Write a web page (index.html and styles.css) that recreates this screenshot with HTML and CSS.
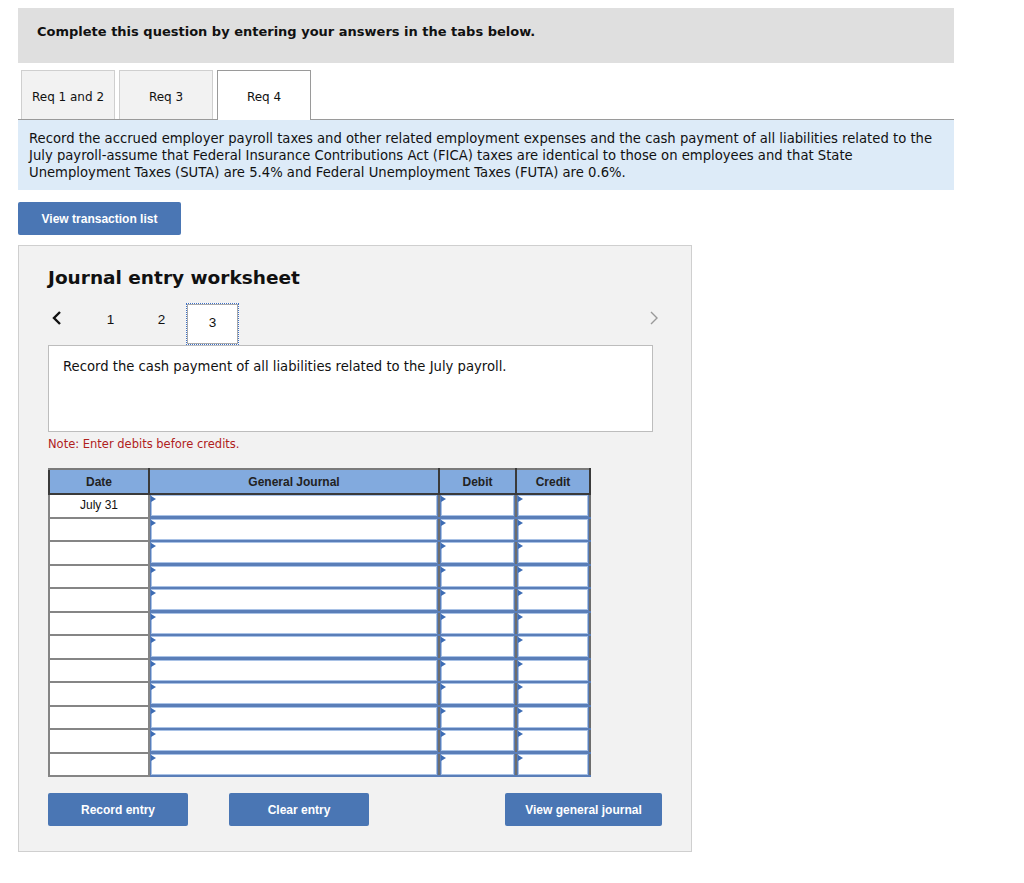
FILE: index.html
```html
<!DOCTYPE html>
<html lang="en">
<head>
    <meta charset="UTF-8">
    <meta name="viewport" content="width=device-width, initial-scale=1.0">
    <title>Journal entry worksheet</title>
    <link rel="stylesheet" href="styles.css">
</head>
<body>
    <div class="page">
        <div class="prompt">Complete this question by entering your answers in the tabs below.</div>

        <div class="tabs">
            <div class="tab">Req 1 and 2</div>
            <div class="tab">Req 3</div>
            <div class="tab active">Req 4</div>
        </div>

        <div class="info">
            Record the accrued employer payroll taxes and other related employment expenses and the cash payment of all liabilities related to the July payroll-assume that Federal Insurance Contributions Act (FICA) taxes are identical to those on employees and that State Unemployment Taxes (SUTA) are 5.4% and Federal Unemployment Taxes (FUTA) are 0.6%.
        </div>

        <button class="btn btn-list">View transaction list</button>

        <div class="worksheet">
            <h2>Journal entry worksheet</h2>

            <div class="steps">
                <span class="arrow prev">
                    <svg width="12" height="16" viewBox="0 0 12 16"><path d="M9 2 L3 8 L9 14" fill="none" stroke="#111" stroke-width="2.4"/></svg>
                </span>
                <span class="step">1</span>
                <span class="step">2</span>
                <span class="step current">3</span>
                <span class="arrow next">
                    <svg width="12" height="16" viewBox="0 0 12 16"><path d="M3 2 L9 8 L3 14" fill="none" stroke="#999" stroke-width="1.4"/></svg>
                </span>
            </div>

            <div class="desc">Record the cash payment of all liabilities related to the July payroll.</div>

            <p class="note">Note: Enter debits before credits.</p>

            <table class="journal">
                <thead>
                    <tr>
                        <th class="c-date">Date</th>
                        <th class="c-acct">General Journal</th>
                        <th class="c-num">Debit</th>
                        <th class="c-num2">Credit</th>
                    </tr>
                </thead>
                <tbody id="rows"></tbody>
            </table>

            <div class="actions">
                <button class="btn">Record entry</button>
                <button class="btn">Clear entry</button>
                <button class="btn wide">View general journal</button>
            </div>
        </div>
    </div>

    <script>
        var body = document.getElementById('rows');
        for (var i = 0; i < 12; i++) {
            var tr = document.createElement('tr');
            tr.innerHTML =
                '<td class="date">' + (i === 0 ? 'July 31' : '') + '</td>' +
                '<td class="field"><div class="box"></div></td>' +
                '<td class="field"><div class="box"></div></td>' +
                '<td class="field"><div class="box"></div></td>';
            body.appendChild(tr);
        }
    </script>
</body>
</html>
```

FILE: styles.css
```css
body {
    margin: 0;
    font-family: "DejaVu Sans", Verdana, sans-serif;
    color: #111;
    background: #fff;
}
.page {
    padding: 8px 0 0 18px;
    width: 936px;
}
.prompt {
    background: #dfdfdf;
    height: 55px;
    box-sizing: border-box;
    padding: 16px 0 0 19px;
    font-size: 13px;
    font-weight: bold;
}
.tabs {
    display: flex;
    gap: 4px;
    margin-top: 7px;
    padding-left: 3px;
    border-bottom: 1px solid #9a9a9a;
    height: 49px;
}
.tab {
    width: 94px;
    height: 49px;
    box-sizing: border-box;
    padding-top: 3px;
    background: #f2f2f2;
    border: 1px solid #cfcfcf;
    border-bottom: none;
    font-size: 12px;
    display: flex;
    align-items: center;
    justify-content: center;
}
.tab.active {
    background: #fff;
    border: 1px solid #9a9a9a;
    border-bottom: none;
    height: 50px;
    padding-top: 2px;
}
.info {
    background: #ddebf8;
    padding: 10px 11px 9px;
    font-size: 13.2px;
    line-height: 17px;
}
.btn {
    background: #4a76b4;
    color: #fff;
    border: none;
    border-radius: 2px;
    font-family: "Liberation Sans", Arial, sans-serif;
    font-weight: bold;
    font-size: 12px;
    height: 33px;
    width: 140px;
    padding: 0;
    cursor: pointer;
}
.btn-list {
    display: block;
    margin-top: 12px;
    width: 163px;
}
.worksheet {
    margin-top: 10px;
    width: 674px;
    box-sizing: border-box;
    background: #f2f2f2;
    border: 1px solid #cfcfcf;
    padding: 18px 0 25px 29px;
    font-family: "Liberation Sans", Arial, sans-serif;
}
.worksheet h2 {
    margin: 0;
    height: 28px;
    font-family: "DejaVu Sans", Verdana, sans-serif;
    font-size: 18.5px;
    line-height: 28px;
}
.steps {
    display: flex;
    align-items: flex-start;
    margin-top: 11px;
    height: 42px;
    width: 615px;
    font-size: 13.5px;
    line-height: 34px;
}
.arrow {
    display: flex;
    align-items: center;
    height: 30px;
}
.arrow.prev {
    padding-left: 3px;
    width: 34px;
}
.step {
    width: 51px;
    text-align: center;
}
.step.current {
    width: 53px;
    height: 42px;
    box-sizing: border-box;
    background: #fff;
    border: 1px dotted #3d6fc4;
    outline: 1px solid #aaa;
    outline-offset: -2px;
    line-height: 38px;
    margin-left: -1px;
}
.arrow.next {
    margin-left: auto;
    margin-right: 3px;
}
.desc {
    width: 605px;
    height: 87px;
    box-sizing: border-box;
    background: #fff;
    border: 1px solid #bdbdbd;
    padding: 13px 14px;
    font-family: "DejaVu Sans", Verdana, sans-serif;
    font-size: 13.2px;
}
.note {
    margin: 5px 0 0;
    font-family: "DejaVu Sans", Verdana, sans-serif;
    font-size: 11.5px;
    color: #b0211c;
}
.journal {
    margin-top: 17px;
    border-collapse: collapse;
    table-layout: fixed;
    font-size: 12px;
    border: 2px solid #7b7b7b;
}
.journal th {
    background: #82aade;
    height: 21px;
    border: 2px solid #3a3a3a;
    border-top-color: #7b7b7b;
    font-weight: bold;
    color: #222;
}
.c-date { width: 96px; }
.c-acct { width: 286px; }
.c-num { width: 73px; }
.c-num2 { width: 70px; }
.journal td {
    height: 21.5px;
    padding: 0;
}
.journal td.date {
    background: #fff;
    border: 2px solid #858585;
    text-align: center;
    vertical-align: top;
    padding-top: 3px;
    height: 18.5px;
}
.journal td.field {
    background: #5a7eb8;
    border: 2px solid #5a7eb8;
    border-left-color: #6d6d6d;
    border-right-color: #6d6d6d;
}
.box {
    position: relative;
    height: 19px;
    background: #fff;
    border: 1px solid #a9c2e6;
    margin: 0 1px;
}
.box::before {
    content: "";
    position: absolute;
    left: -1px;
    top: 0;
    border-left: 5px solid #3d6cb4;
    border-top: 3px solid transparent;
    border-bottom: 3px solid transparent;
}
.actions {
    display: flex;
    margin-top: 16px;
    width: 614px;
}
.actions .btn + .btn {
    margin-left: 41px;
}
.actions .btn.wide {
    width: 157px;
    margin-left: auto;
}
```
